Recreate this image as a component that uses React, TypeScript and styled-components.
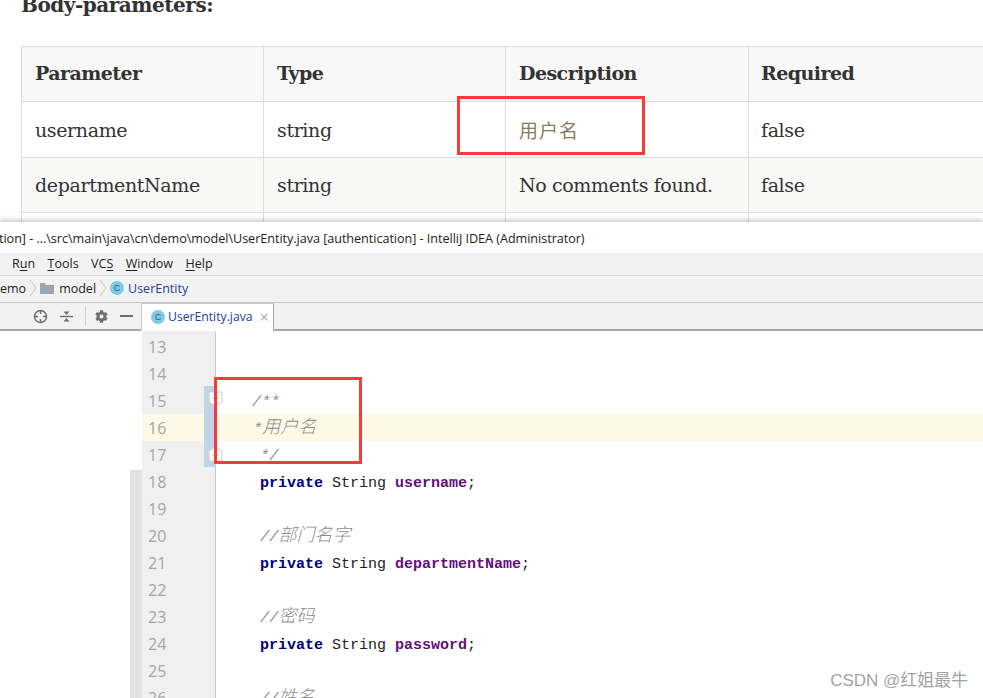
import React from "react";
import styled, { createGlobalStyle } from "styled-components";
import { FaCog } from "react-icons/fa";

const Global = createGlobalStyle`
  html, body { margin: 0; padding: 0; background: #fff; }
  #root { width: 983px; height: 698px; overflow: hidden; }
`;
const Page = styled.div`
  position: relative; width: 983px; height: 698px; overflow: hidden;
  display: flex; flex-direction: column; background: #fff;
`;
const DocPane = styled.section`
  height: 222px; flex: none; overflow: hidden; padding-left: 21px;
  font-family: "DejaVu Serif", "Noto Sans CJK SC", serif; color: #333;
`;
const Heading = styled.h3`
  margin: -9px 0 0; height: 55px; font-size: 20px; line-height: 28px; font-weight: 700; letter-spacing: -0.47px;
`;
const Table = styled.div`
  width: 1100px; border-top: 1px solid #ddd; border-left: 1px solid #ddd;
`;
const Row = styled.div<{ $bg: string; $h: number }>`
  display: grid; grid-template-columns: 242px 242px 243px 1fr; height: ${p => p.$h}px; background: ${p => p.$bg}; border-bottom: 1px solid #ddd; box-sizing: border-box;
`;
const Cell = styled.div<{ $head?: boolean; $tone?: string }>`
  display: flex; align-items: center; padding: 0 13px ${p => (p.$head ? "2px" : "0")}; border-right: 1px solid #ddd; font-size: 19px;
  letter-spacing: ${p => (p.$tone ? "1px" : p.$head ? "-0.55px" : "-0.37px")}; font-weight: ${p => (p.$head ? 700 : 400)}; color: ${p => p.$tone ?? "#333"};
  &:nth-child(4) { padding-left: 12px; }
`;
const Window = styled.section`
  flex: 1; min-height: 0; display: flex; flex-direction: column; position: relative;
  box-shadow: 0 -2px 5px rgba(0,0,0,0.22);
  font-family: "Noto Sans", "Noto Sans CJK SC", sans-serif;
`;
const TitleBar = styled.div`
  height: 31px; flex: none; background: #fff; display: flex; align-items: center; font-size: 12.65px; color: #222; white-space: nowrap; letter-spacing: -0.05px;
  font-family: "Open Sans", sans-serif; margin-left: -1px;
`;
const MenuBar = styled.div`
  height: 22px; flex: none; background: #f2f2f2; display: flex; align-items: center; gap: 12.5px; padding: 0 0 2px 12px; box-sizing: border-box; font-size: 12.5px; color: #222;
  font-family: "Open Sans", sans-serif;
  u { text-underline-offset: 2px; }
`;
const Crumbs = styled.div`
  height: 28px; flex: none; box-sizing: border-box; background: #f2f2f2; border-top: 1px solid #d5d5d5; border-bottom: 1px solid #c8c8c8; display: flex; align-items: center; padding-bottom: 2px; font-size: 12.5px; color: #222; font-family: "Open Sans", sans-serif;
`;
const Crumb = styled.span<{ $blue?: boolean }>`
  color: ${p => (p.$blue ? "#23409c" : "#222")}; margin-left: ${p => (p.$blue ? "4px" : "0")};
`;
const Chevron = styled.svg`
  width: 9px; height: 18px; margin: 0 2px 0 3px; flex: none;
`;
const FolderIcon = styled.svg`
  width: 14px; height: 12px; margin: 0 5px 0 0; flex: none;
`;
const ClassDot = styled.span`
  width: 14px; height: 14px; border-radius: 50%; background: #7fcbe6; color: #2e5a78; font-size: 9px; font-family: "Liberation Sans", sans-serif;
  display: inline-flex; align-items: center; justify-content: center; flex: none;
`;
const TabBar = styled.div`
  height: 28px; flex: none; box-sizing: border-box; background: #f2f2f2; border-bottom: 2px solid #a8a8a8; display: flex; position: relative;
`;
const ToolArea = styled.div`
  width: 141px; flex: none; display: flex; align-items: center; justify-content: flex-end; color: #6e6e6e;
`;
const ToolIcon = styled.svg`
  width: 15px; height: 15px; flex: none; margin-right: 11px;
`;
const ToolSep = styled.span`
  width: 1px; height: 20px; background: #d0d0d0; margin: 0 9px 0 0;
`;
const Gear = styled(FaCog)`
  width: 13px; height: 13px; flex: none; margin-right: 12px; color: #6e6e6e;
`;
const MinusBar = styled.span`
  width: 13px; height: 2px; background: #6e6e6e; margin-right: 8px; flex: none;
`;
const Tab = styled.div`
  height: 28px; box-sizing: border-box; width: 133px; background: #fff; border: 1px solid #a8a8a8; border-top-color: #c8c8c8; border-bottom: none; border-left-color: #c8c8c8;
  display: flex; align-items: center; padding: 0 0 2px 9px; gap: 3px; font-size: 12.2px; color: #23409c; font-family: "Open Sans", sans-serif;
`;
const TabClose = styled.span`
  color: #aaa; font-size: 16px; margin-left: 4px;
`;
const Body = styled.div`
  flex: 1; min-height: 0; display: flex; overflow: hidden;
`;
const Side = styled.div`
  width: 142px; flex: none; display: flex; flex-direction: column; justify-content: flex-end; align-items: flex-end;
`;
const SideStrip = styled.div`
  width: 12px; height: 228px; background: #e2e2e2;
`;
const Editor = styled.div`
  flex: 1; position: relative; min-width: 0;
`;
const Line = styled.div<{ $active?: boolean }>`
  height: 27px; display: flex; background: ${p => (p.$active ? "#fef9e6" : "#fff")};
  &:first-child { height: 29px; }
`;
const Num = styled.div<{ $active?: boolean }>`
  width: 74px; flex: none; box-sizing: border-box; padding: 1px 0 0 6px; background: ${p => (p.$active ? "#fef9e6" : "#f0f0f0")}; border-right: 1px solid #c9c9c9;
  font-family: "Open Sans", sans-serif; font-size: 16px; line-height: 27px; color: #a6a6a6;
  ${Line}:first-child & { padding-top: 3px; }
`;
const Code = styled.div<{ $indent: number }>`
  padding: 2px 0 0 ${p => p.$indent}px; font-family: "Liberation Mono", monospace; font-size: 15px; line-height: 27px; color: #222; white-space: pre;
`;
const Kw = styled.b`color: #000080;`;
const Field = styled.b`color: #660e7a;`;
const Comment = styled.i`
  color: #8c8c8c; font-family: "Liberation Mono", "Noto Sans CJK SC", monospace; font-size: 15.5px; font-weight: 300;
`;
const Han = styled.span`
  font-size: 18px; line-height: 20px; font-weight: 200;
`;
const FoldBand = styled.div`
  position: absolute; left: 62px; top: 55px; width: 11px; height: 81px; background: #c3d4e8;
`;
const FoldMark = styled.svg<{ $top: number }>`
  position: absolute; left: 66px; top: ${p => p.$top}px; width: 15px; height: 16px;
`;
const RedBox = styled.div<{ $x: number; $y: number; $w: number; $h: number }>`
  position: absolute; left: ${p => p.$x}px; top: ${p => p.$y}px; width: ${p => p.$w}px; height: ${p => p.$h}px; box-sizing: border-box; border: 3px solid #f63b3b; pointer-events: none;
`;
const Watermark = styled.div`
  position: absolute; right: 15px; top: 671px; font-family: "Liberation Sans", "Noto Sans CJK SC", sans-serif; font-size: 17px; line-height: 20px; color: #a3a3a3; letter-spacing: -0.05px;
`;

const rows = [
  { bg: "#f8f8f8", h: 55, head: true, c: ["Parameter", "Type", "Description", "Required"] },
  { bg: "#fff", h: 56, c: ["username", "string", "用户名", "false"] },
  { bg: "#f8f8f7", h: 55, c: ["departmentName", "string", "No comments found.", "false"] },
  { bg: "#fff", h: 56, c: ["", "", "", ""] },
];

const Decl = ({ name }: { name: string }) => (
  <Code $indent={44}><Kw>private</Kw> String <Field>{name}</Field>;</Code>
);
const Note = ({ t, han, i }: { t: string; han?: string; i: number }) => (
  <Code $indent={i}><Comment>{t}{han && <Han>{han}</Han>}</Comment></Code>
);
const lines: [number, React.ReactNode][] = [
  [13, null], [14, null], [15, <Note t="/**" i={36} />], [16, <Note t="*" han="用户名" i={37} />], [17, <Note t="*/" i={44} />],
  [18, <Decl name="username" />], [19, null], [20, <Note t="//" han="部门名字" i={44} />], [21, <Decl name="departmentName" />],
  [22, null], [23, <Note t="//" han="密码" i={44} />], [24, <Decl name="password" />], [25, null], [26, <Note t="//" han="姓名" i={44} />],
];

const Chev = () => (
  <Chevron viewBox="0 0 9 18"><path d="M1 1l6 8-6 8" fill="none" stroke="#c4c4c4" /></Chevron>
);

export default function App() {
  return (
    <Page>
      <Global />
      <DocPane>
        <Heading>Body-parameters:</Heading>
        <Table>
          {rows.map((r, i) => (
            <Row key={i} $bg={r.bg} $h={r.h}>
              {r.c.map((t, j) => (
                <Cell key={j} $head={r.head} $tone={t === "用户名" ? "#8a7a5e" : undefined}>{t}</Cell>
              ))}
            </Row>
          ))}
        </Table>
      </DocPane>
      <Window>
        <TitleBar>tion] - ...\src\main\java\cn\demo\model\UserEntity.java [authentication] - IntelliJ IDEA (Administrator)</TitleBar>
        <MenuBar>
          <span>R<u>u</u>n</span><span><u>T</u>ools</span><span>VC<u>S</u></span><span><u>W</u>indow</span><span><u>H</u>elp</span>
        </MenuBar>
        <Crumbs>
          <Crumb>emo</Crumb>
          <Chev />
          <FolderIcon viewBox="0 0 14 12"><path d="M0 1h5l1 2h8v9H0z" fill="#9aa7b0" /></FolderIcon>
          <Crumb>model</Crumb>
          <Chev />
          <ClassDot>C</ClassDot>
          <Crumb $blue>UserEntity</Crumb>
        </Crumbs>
        <TabBar>
          <ToolArea>
            <ToolIcon viewBox="0 0 15 15" fill="none" stroke="currentColor" strokeWidth="1.5">
              <circle cx="7.5" cy="7.5" r="6" /><path d="M7.5 1v4M7.5 10v4M1 7.5h4M10 7.5h4" />
            </ToolIcon>
            <ToolIcon viewBox="0 0 15 15" fill="currentColor">
              <path d="M1 6.8h13v1.4H1z" /><path d="M7.5 6L4.5 2.5h6zM7.5 9l-3 3.5h6z" />
            </ToolIcon>
            <ToolSep />
            <Gear />
            <MinusBar />
          </ToolArea>
          <Tab>
            <ClassDot>C</ClassDot>UserEntity.java<TabClose>×</TabClose>
          </Tab>
        </TabBar>
        <Body>
          <Side><SideStrip /></Side>
          <Editor>
            {lines.map(([n, c]) => (
              <Line key={n} $active={n === 16}>
                <Num $active={n === 16}>{n}</Num>
                {c}
              </Line>
            ))}
            <FoldBand />
            <FoldMark $top={60} viewBox="0 0 15 16"><path d="M1 1h13v10l-6.5 4L1 11z" fill="#fff" stroke="#ccc" /><path d="M4 7h7" stroke="#bbb" /></FoldMark>
            <FoldMark $top={115} viewBox="0 0 15 16"><path d="M1 15h13V5L7.500 1 1 5z" fill="#fff" stroke="#ccc" /><path d="M4 9h7" stroke="#bbb" /></FoldMark>
          </Editor>
        </Body>
      </Window>
      <RedBox $x={457} $y={96} $w={188} $h={59} />
      <RedBox $x={214} $y={377} $w={148} $h={87} />
      <Watermark>CSDN @红姐最牛</Watermark>
    </Page>
  );
}
